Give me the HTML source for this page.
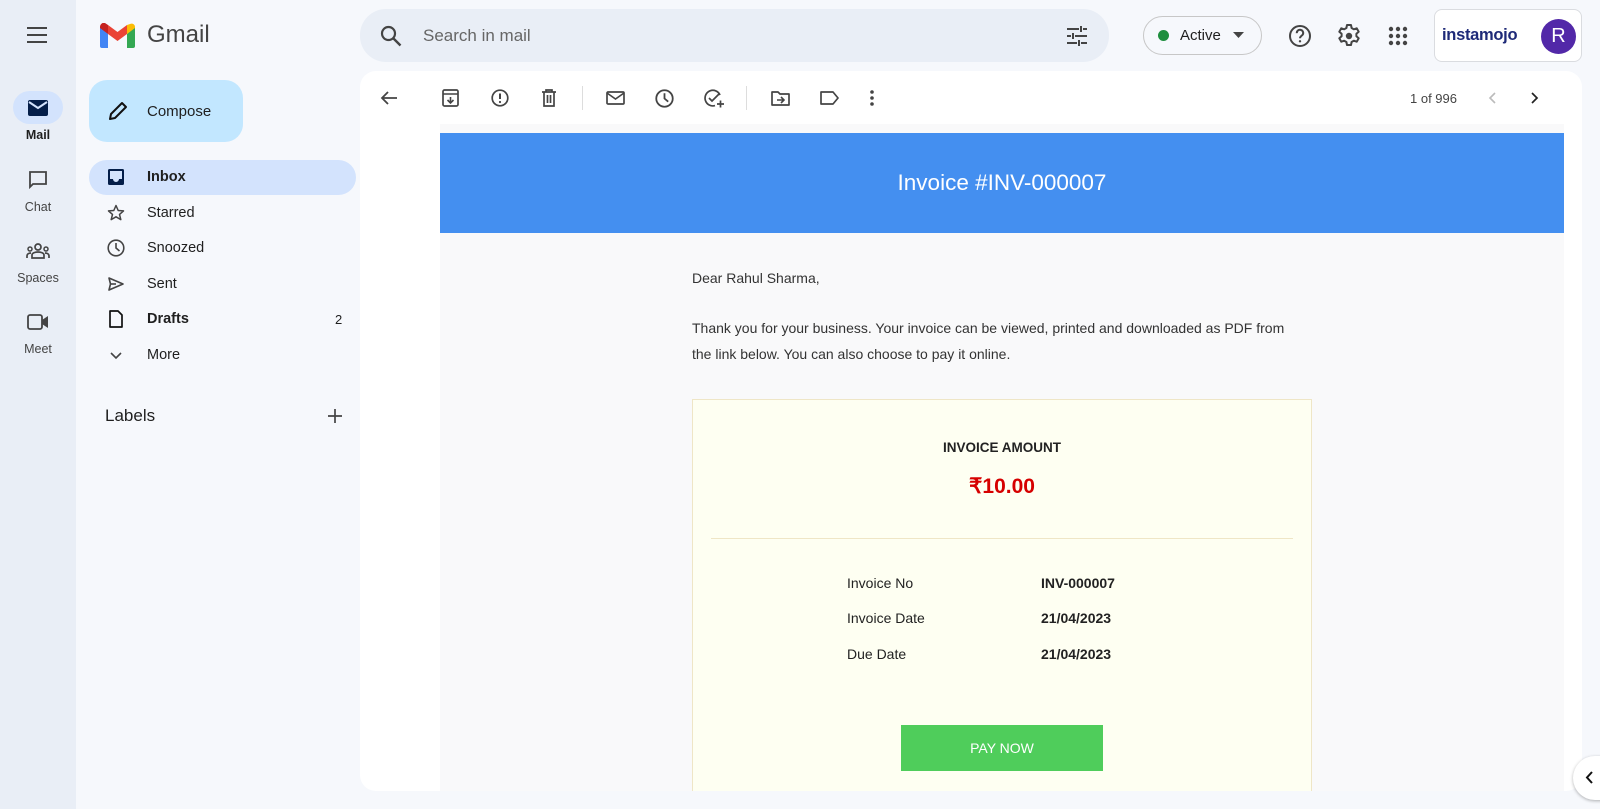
<!DOCTYPE html>
<html><head><meta charset="utf-8"><style>
*{box-sizing:border-box;margin:0;padding:0}
body{width:1600px;height:809px;overflow:hidden;background:#f6f8fc;font-family:"Liberation Sans",Arial,sans-serif;color:#1f1f1f;position:relative}
.abs{position:absolute}
.rail{left:0;top:0;width:76px;height:809px;background:#e9eef6}
.rl{position:absolute;width:76px;text-align:center;font-size:12.5px;color:#444}
.nav{position:absolute;left:89px;width:267px;height:35px;border-radius:18px;font-size:14.5px;color:#1f1f1f}
.nav span{position:absolute;left:58px;top:9px}
.nav svg{position:absolute;left:18px;top:8px}
.lbl{position:absolute;font-size:14px;color:#222}
</style></head><body>
<div class="abs rail"></div>
<svg class="abs" style="left:26px;top:26px" width="22" height="18" viewBox="0 0 22 18"><path d="M1 2h20M1 9h20M1 16h20" stroke="#444" stroke-width="2"/></svg>
<div class="abs" style="left:13px;top:91px;width:50px;height:33px;border-radius:17px;background:#d3e3fd"></div>
<svg class="abs" style="left:28px;top:100px" width="20" height="16" viewBox="0 0 20 16"><rect x="0" y="0" width="20" height="16" rx="2" fill="#041e49"/><path d="M1 2l9 6 9-6" stroke="#d3e3fd" stroke-width="2" fill="none"/></svg>
<div class="rl" style="top:128px;font-weight:bold;color:#1f1f1f">Mail</div>
<svg class="abs" style="left:28px;top:170px" width="20" height="20" viewBox="0 0 20 20"><path d="M2 2h16v12H5l-3 3z" stroke="#444" stroke-width="1.8" fill="none"/></svg>
<div class="rl" style="top:200px">Chat</div>
<svg class="abs" style="left:26px;top:242px" width="24" height="18" viewBox="0 0 24 18"><circle cx="12" cy="5" r="3" stroke="#444" stroke-width="1.7" fill="none"/><circle cx="4" cy="7" r="2" stroke="#444" stroke-width="1.5" fill="none"/><circle cx="20" cy="7" r="2" stroke="#444" stroke-width="1.5" fill="none"/><path d="M6 16v-3c0-2 3-3 6-3s6 1 6 3v3zM1 16v-2c0-2 2-3 4-3M23 16v-2c0-2-2-3-4-3" stroke="#444" stroke-width="1.7" fill="none"/></svg>
<div class="rl" style="top:271px">Spaces</div>
<svg class="abs" style="left:27px;top:314px" width="22" height="16" viewBox="0 0 22 16"><rect x="1" y="1" width="14" height="14" rx="2" stroke="#444" stroke-width="1.8" fill="none"/><path d="M15 6l6-4v12l-6-4z" fill="#444"/></svg>
<div class="rl" style="top:342px">Meet</div>
<svg class="abs" style="left:100px;top:23px" width="35" height="25" viewBox="0 0 35 25"><path d="M0 4v19a2 2 0 002 2h6V11z" fill="#4285f4"/><path d="M27 25h6a2 2 0 002-2V4l-8 7z" fill="#34a853"/><path d="M27 2v9l8-6V4c0-3-3-4-5-3z" fill="#fbbc04"/><path d="M8 11V2l9.5 7L27 2v9l-9.5 7z" fill="#ea4335"/><path d="M0 4v1l8 6V2L5 0C3-1 0 1 0 4z" fill="#c5221f"/></svg>
<div class="abs" style="left:147px;top:21px;font-size:24px;color:#444">Gmail</div>
<div class="abs" style="left:89px;top:80px;width:154px;height:62px;border-radius:18px;background:#c2e7ff"></div>
<svg class="abs" style="left:107px;top:100px" width="22" height="22" viewBox="0 0 22 22"><path d="M3 19l1-5L15 3l4 4L8 18z" stroke="#111" stroke-width="2" fill="none" stroke-linejoin="round"/></svg>
<div class="abs" style="left:147px;top:103px;font-size:15px;color:#1f1f1f">Compose</div>
<div class="nav" style="top:160px;background:#d3e3fd;font-weight:bold"><svg width="18" height="18" viewBox="0 0 18 18"><rect x="1" y="1" width="16" height="16" rx="1.5" fill="#041e49"/><path d="M3 3h12v8h-3a3 3 0 01-6 0H3z" fill="#d3e3fd"/></svg><span>Inbox</span></div>
<div class="nav" style="top:196px"><svg width="18" height="18" viewBox="0 0 18 18"><path d="M9 1.5l2.2 5 5.3.4-4 3.5 1.3 5.2L9 12.8l-4.8 2.8 1.3-5.2-4-3.5 5.3-.4z" stroke="#444" stroke-width="1.5" fill="none" stroke-linejoin="round"/></svg><span>Starred</span></div>
<div class="nav" style="top:231px"><svg width="18" height="18" viewBox="0 0 18 18"><circle cx="9" cy="9" r="7.8" stroke="#444" stroke-width="1.6" fill="none"/><path d="M9 4v5l3.5 3" stroke="#444" stroke-width="1.6" fill="none"/></svg><span>Snoozed</span></div>
<div class="nav" style="top:267px"><svg width="18" height="18" viewBox="0 0 18 18"><path d="M2 3l14 6-14 6 1.5-6z" stroke="#444" stroke-width="1.6" fill="none" stroke-linejoin="round"/><path d="M3.5 9H9" stroke="#444" stroke-width="1.6"/></svg><span>Sent</span></div>
<div class="nav" style="top:302px;font-weight:bold"><svg width="18" height="18" viewBox="0 0 18 18"><path d="M3 1h8l4 4v12H3z" stroke="#111" stroke-width="1.7" fill="none" stroke-linejoin="round"/></svg><span>Drafts</span><span style="left:246px;font-weight:normal;font-size:13px;top:10px">2</span></div>
<div class="nav" style="top:338px"><svg width="18" height="18" viewBox="0 0 18 18"><path d="M4 7l5 5 5-5" stroke="#444" stroke-width="1.6" fill="none"/></svg><span>More</span></div>
<div class="abs" style="left:105px;top:406px;font-size:17px;color:#1f1f1f">Labels</div>
<svg class="abs" style="left:327px;top:408px" width="16" height="16" viewBox="0 0 16 16"><path d="M8 1v14M1 8h14" stroke="#444" stroke-width="1.7"/></svg>
<div class="abs" style="left:360px;top:9px;width:749px;height:53px;border-radius:26px;background:#e9eef6"></div>
<svg class="abs" style="left:380px;top:25px" width="22" height="22" viewBox="0 0 22 22"><circle cx="8.5" cy="8.5" r="6.5" stroke="#444" stroke-width="2.2" fill="none"/><path d="M13.5 13.5l7 7" stroke="#444" stroke-width="2.4"/></svg>
<div class="abs" style="left:423px;top:26px;font-size:17px;color:#666">Search in mail</div>
<svg class="abs" style="left:1066px;top:26px" width="22" height="20" viewBox="0 0 22 20"><path d="M1 3h12M17 3h4M1 10h4M9 10h12M1 17h10M15 17h6" stroke="#444" stroke-width="2"/><path d="M15 0v6M7 7v6M13 14v6" stroke="#444" stroke-width="2"/></svg>
<div class="abs" style="left:1143px;top:16px;width:119px;height:39px;border-radius:20px;border:1px solid #c7c7c7"></div>
<div class="abs" style="left:1158px;top:30px;width:11px;height:11px;border-radius:50%;background:#1e8e3e"></div>
<div class="abs" style="left:1180px;top:27px;font-size:15px;color:#1f1f1f">Active</div>
<svg class="abs" style="left:1233px;top:32px" width="11" height="6"><path d="M0 0h11L5.5 6z" fill="#444"/></svg>
<svg class="abs" style="left:1288px;top:24px" width="24" height="24" viewBox="0 0 24 24"><circle cx="12" cy="12" r="10" stroke="#444" stroke-width="2" fill="none"/><path d="M8.8 9.2a3.2 3.2 0 116 1.3c-.7 1.2-2.8 1.7-2.8 3.8" stroke="#444" stroke-width="2" fill="none"/><circle cx="12" cy="17.3" r="1.2" fill="#444"/></svg>
<svg class="abs" style="left:1337px;top:24px" width="24" height="24" viewBox="0 0 24 24"><path d="M10 1h4l.6 3 2.2 1.3 2.9-1 2 3.4-2.3 2v2.6l2.3 2-2 3.4-2.9-1-2.2 1.3-.6 3h-4l-.6-3-2.2-1.3-2.9 1-2-3.4 2.3-2v-2.6l-2.3-2 2-3.4 2.9 1L9.4 4z" stroke="#444" stroke-width="2" fill="none" stroke-linejoin="round"/><circle cx="12" cy="12" r="3.2" fill="#444"/></svg>
<svg class="abs" style="left:1388px;top:26px" width="20" height="20" viewBox="0 0 20 20" fill="#444"><circle cx="3" cy="3" r="2.2"/><circle cx="10" cy="3" r="2.2"/><circle cx="17" cy="3" r="2.2"/><circle cx="3" cy="10" r="2.2"/><circle cx="10" cy="10" r="2.2"/><circle cx="17" cy="10" r="2.2"/><circle cx="3" cy="17" r="2.2"/><circle cx="10" cy="17" r="2.2"/><circle cx="17" cy="17" r="2.2"/></svg>
<div class="abs" style="left:1434px;top:9px;width:148px;height:53px;border-radius:8px;background:#fff;border:1px solid #dadce0"></div>
<div class="abs" style="left:1442px;top:26px;font-size:16.5px;font-weight:bold;color:#1e2a78;letter-spacing:-0.3px">instamojo</div>
<div class="abs" style="left:1541px;top:19px;width:35px;height:35px;border-radius:50%;background:#5228a8;color:#fff;font-size:20px;text-align:center;line-height:35px">R</div>
<div class="abs" style="left:360px;top:71px;width:1222px;height:720px;border-radius:16px;background:#fff;overflow:hidden">
<div class="abs" style="left:80px;top:53px;width:1124px;height:700px;background:#f9f9fa"></div>
<div class="abs" style="left:80px;top:62px;width:1124px;height:100px;background:#448ff0;color:#fff;font-size:22.5px;text-align:center;line-height:100px">Invoice #INV-000007</div>
<div class="abs" style="left:332px;top:328px;width:620px;height:420px;background:#fefff2;border:1px solid #efe6c6"></div>
</div>
<svg class="abs" style="left:380px;top:90px" width="18" height="16" viewBox="0 0 18 16"><path d="M17 8H2M8 2L2 8l6 6" stroke="#444" stroke-width="1.8" fill="none"/></svg>
<svg class="abs" style="left:442px;top:89px" width="17" height="18" viewBox="0 0 17 18"><rect x="1" y="1" width="15" height="16" rx="1.5" stroke="#444" stroke-width="1.7" fill="none"/><path d="M1 5h15M8.5 8v6M5.5 11l3 3 3-3" stroke="#444" stroke-width="1.6" fill="none"/></svg>
<svg class="abs" style="left:491px;top:89px" width="18" height="18" viewBox="0 0 18 18"><circle cx="9" cy="9" r="7.8" stroke="#444" stroke-width="1.7" fill="none"/><path d="M9 4.5v5.5" stroke="#444" stroke-width="2"/><circle cx="9" cy="13" r="1.1" fill="#444"/></svg>
<svg class="abs" style="left:541px;top:89px" width="16" height="18" viewBox="0 0 16 18"><path d="M1 3h14M5 3V1h6v2M3 3v14h10V3M6.5 6v8M9.5 6v8" stroke="#444" stroke-width="1.7" fill="none"/></svg>
<div class="abs" style="left:582px;top:86px;width:1px;height:24px;background:#ddd"></div>
<svg class="abs" style="left:606px;top:91px" width="19" height="14" viewBox="0 0 19 14"><rect x="1" y="1" width="17" height="12" rx="1" stroke="#444" stroke-width="1.7" fill="none"/><path d="M1 2l8.5 6L18 2" stroke="#444" stroke-width="1.6" fill="none"/></svg>
<svg class="abs" style="left:655px;top:89px" width="19" height="19" viewBox="0 0 18 18"><circle cx="9" cy="9" r="7.8" stroke="#444" stroke-width="1.7" fill="none"/><path d="M9 4v5l3.5 3" stroke="#444" stroke-width="1.7" fill="none"/></svg>
<svg class="abs" style="left:704px;top:89px" width="21" height="20" viewBox="0 0 21 20"><path d="M16 6A7.8 7.8 0 1011 16.6" stroke="#444" stroke-width="1.7" fill="none"/><path d="M5 9l3 3 7-7M13 15h7M16.5 11.5v7" stroke="#444" stroke-width="1.7" fill="none"/></svg>
<div class="abs" style="left:746px;top:86px;width:1px;height:24px;background:#ddd"></div>
<svg class="abs" style="left:771px;top:90px" width="19" height="16" viewBox="0 0 19 16"><path d="M1 2h6l2 2h9v11H1z" stroke="#444" stroke-width="1.7" fill="none" stroke-linejoin="round"/><path d="M6 10h7M10 7l3 3-3 3" stroke="#444" stroke-width="1.6" fill="none"/></svg>
<svg class="abs" style="left:820px;top:91px" width="19" height="14" viewBox="0 0 19 14"><path d="M1 1h12l5 6-5 6H1z" stroke="#444" stroke-width="1.7" fill="none" stroke-linejoin="round"/></svg>
<svg class="abs" style="left:869px;top:89px" width="6" height="18" viewBox="0 0 6 18" fill="#444"><circle cx="3" cy="3" r="1.8"/><circle cx="3" cy="9" r="1.8"/><circle cx="3" cy="15" r="1.8"/></svg>
<div class="abs" style="left:1410px;top:91px;font-size:13px;color:#444">1 of 996</div>
<svg class="abs" style="left:1488px;top:92px" width="8" height="12"><path d="M7 1L2 6l5 5" stroke="#bbb" stroke-width="1.6" fill="none"/></svg>
<svg class="abs" style="left:1531px;top:92px" width="8" height="12"><path d="M1 1l5 5-5 5" stroke="#222" stroke-width="1.7" fill="none"/></svg>
<div class="abs" style="left:692px;top:270px;font-size:14px;color:#333">Dear Rahul Sharma,</div>
<div class="abs" style="left:692px;top:316px;width:603px;font-size:14px;line-height:25.5px;color:#333">Thank you for your business. Your invoice can be viewed, printed and downloaded as PDF from the link below. You can also choose to pay it online.</div>
<div class="abs" style="left:692px;top:440px;width:620px;text-align:center;font-size:13.5px;font-weight:bold;color:#222">INVOICE AMOUNT</div>
<div class="abs" style="left:692px;top:474px;width:620px;text-align:center;font-size:21px;font-weight:bold;color:#d60000">₹10.00</div>
<div class="abs" style="left:711px;top:538px;width:582px;height:1px;background:#efe6c6"></div>
<div class="lbl" style="left:847px;top:575px">Invoice No</div><div class="lbl" style="left:1041px;top:575px;font-weight:bold">INV-000007</div>
<div class="lbl" style="left:847px;top:610px">Invoice Date</div><div class="lbl" style="left:1041px;top:610px;font-weight:bold">21/04/2023</div>
<div class="lbl" style="left:847px;top:646px">Due Date</div><div class="lbl" style="left:1041px;top:646px;font-weight:bold">21/04/2023</div>
<div class="abs" style="left:901px;top:725px;width:202px;height:46px;background:#4fcd5b;color:#fff;font-size:14px;text-align:center;line-height:46px">PAY NOW</div>
<div class="abs" style="left:1573px;top:756px;width:50px;height:44px;border-radius:22px;background:#fff;box-shadow:0 1px 3px rgba(0,0,0,.3)"></div>
<svg class="abs" style="left:1585px;top:771px" width="8" height="13"><path d="M7 1L2 6.5 7 12" stroke="#111" stroke-width="2" fill="none"/></svg>
</body></html>
